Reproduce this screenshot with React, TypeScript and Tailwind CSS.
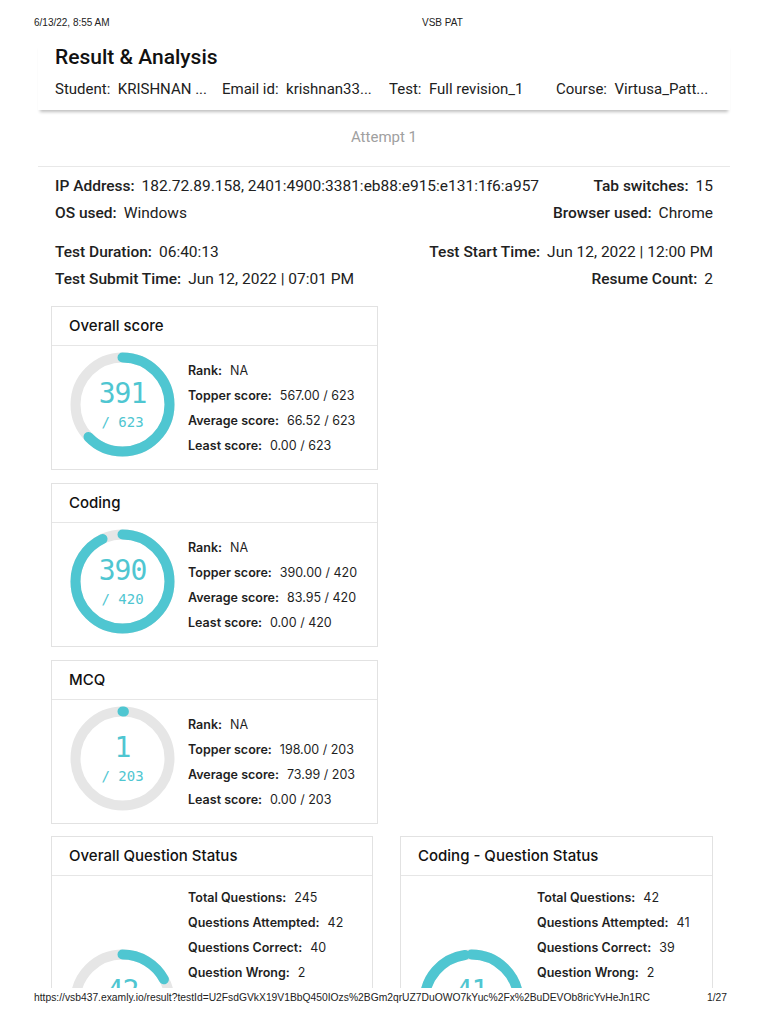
import React from "react";

const TEAL = "#4fc6d1";

function Donut({ value, total, showTotal = true }: { value: number; total: number; showTotal?: boolean }) {
  const r = 47;
  const c = 2 * Math.PI * r;
  const pct = Math.max(0, Math.min(1, value / total));
  const len = Math.max(c * pct, 0.01);
  return (
    <div className="relative h-[105px] w-[105px] shrink-0">
      <svg width="105" height="105" viewBox="0 0 105 105" className="-rotate-90">
        <circle cx="52.5" cy="52.5" r={r} fill="none" stroke="#e6e6e6" strokeWidth="10" />
        <circle
          cx="52.5"
          cy="52.5"
          r={r}
          fill="none"
          stroke={TEAL}
          strokeWidth="10"
          strokeLinecap="round"
          strokeDasharray={`${len} ${c}`}
        />
      </svg>
      <div className="absolute inset-0 flex flex-col items-center justify-center font-['DejaVu_Sans_Mono',monospace] text-[#4fc6d1]">
        <span className="text-[28px] leading-[30px] tracking-[-1px]">{value}</span>
        {showTotal ? (
          <span className="mt-[5px] text-[14px] leading-[16px]">/ {total}</span>
        ) : (
          <span className="mt-[5px] h-[16px]" />
        )}
      </div>
    </div>
  );
}

function Row({ label, value }: { label: string; value: string }) {
  return (
    <div className="flex h-[25px] items-center gap-[8px] whitespace-nowrap text-[12.5px] text-[#1f1f1f]">
      <span className="font-semibold">{label}</span>
      <span>{value}</span>
    </div>
  );
}

function ScoreCard({
  title,
  value,
  total,
  topper,
  avg,
  least,
}: {
  title: string;
  value: number;
  total: number;
  topper: string;
  avg: string;
  least: string;
}) {
  return (
    <section className="w-[327px] border border-[#e2e2e2] bg-white">
      <div className="flex h-[39px] items-center border-b border-[#e6e6e6] px-[17px] text-[15px] font-medium text-[#111]">
        {title}
      </div>
      <div className="flex h-[123px] items-start gap-[13px] pl-[18px] pt-[6px]">
        <Donut value={value} total={total} />
        <div className="pt-[7px]">
          <Row label="Rank:" value="NA" />
          <Row label="Topper score:" value={`${topper} / ${total}`} />
          <Row label="Average score:" value={`${avg} / ${total}`} />
          <Row label="Least score:" value={`${least} / ${total}`} />
        </div>
      </div>
    </section>
  );
}

function StatusCard({
  title,
  width,
  rows,
  value,
  total,
}: {
  title: string;
  width: string;
  rows: [string, string][];
  value: number;
  total: number;
}) {
  return (
    <section className={`${width} border border-[#e2e2e2] bg-white`}>
      <div className="flex h-[39px] items-center border-b border-[#e6e6e6] px-[17px] text-[15px] font-medium text-[#111]">
        {title}
      </div>
      <div className="flex h-[160px] items-start gap-[13px] pl-[18px]">
        <div className="mt-[73px]">
          <Donut value={value} total={total} showTotal={false} />
        </div>
        <div className="pt-[10px]">
          {rows.map(([l, v]) => (
            <Row key={l} label={l} value={v} />
          ))}
        </div>
      </div>
    </section>
  );
}

function Info({ label, value }: { label: string; value: string }) {
  return (
    <div className="flex items-center gap-[7px] whitespace-nowrap">
      <span className="font-medium">{label}</span>
      <span>{value}</span>
    </div>
  );
}

export default function App() {
  return (
    <div className="flex h-[1024px] w-[768px] flex-col overflow-hidden bg-white font-['Roboto',sans-serif] text-[#212121]">
      {/* print header */}
      <div className="flex h-[43px] pl-[34px] pt-[17px] font-['Liberation_Sans',Arial,sans-serif] text-[10px] leading-[12px] text-[#222]">
        <span className="w-[388px]">6/13/22, 8:55 AM</span>
        <span>VSB PAT</span>
      </div>

      <main className="h-[945px] overflow-hidden">
        <header className="mx-[38px] px-[17px] pb-[11px] shadow-[0_4px_3px_-2px_rgba(0,0,0,0.25)]">
          <h1 className="text-[21px] font-medium leading-[28px] text-[#111]">Result &amp; Analysis</h1>
          <div className="mt-[8px] grid grid-cols-[167px_167px_167px_auto] text-[15px] leading-[20px]">
            <div className="whitespace-nowrap">Student:&nbsp; KRISHNAN ...</div>
            <div className="whitespace-nowrap">Email id:&nbsp; krishnan33...</div>
            <div className="whitespace-nowrap">Test:&nbsp; Full revision_1</div>
            <div className="whitespace-nowrap">Course:&nbsp; Virtusa_Patt...</div>
          </div>
        </header>

        <div className="mx-[38px] border-b border-[#e8e8e8] pb-[19px] pt-[17px] text-center text-[15px] leading-[20px] text-[#a0a0a0]">
          Attempt 1
        </div>

        <div className="mx-[55px] mt-[9px] text-[15.5px] leading-[20px]">
          <div className="flex justify-between">
            <Info label="IP Address:" value="182.72.89.158, 2401:4900:3381:eb88:e915:e131:1f6:a957" />
            <Info label="Tab switches:" value="15" />
          </div>
          <div className="mt-[7px] flex justify-between">
            <Info label="OS used:" value="Windows" />
            <Info label="Browser used:" value="Chrome" />
          </div>
          <div className="mt-[19px] flex justify-between">
            <Info label="Test Duration:" value="06:40:13" />
            <Info label="Test Start Time:" value="Jun 12, 2022 | 12:00 PM" />
          </div>
          <div className="mt-[7px] flex justify-between">
            <Info label="Test Submit Time:" value="Jun 12, 2022 | 07:01 PM" />
            <Info label="Resume Count:" value="2" />
          </div>
        </div>

        <div className="ml-[51px] mt-[17px] flex flex-col gap-[13px] font-['Inter',sans-serif]">
          <ScoreCard title="Overall score" value={391} total={623} topper="567.00" avg="66.52" least="0.00" />
          <ScoreCard title="Coding" value={390} total={420} topper="390.00" avg="83.95" least="0.00" />
          <ScoreCard title="MCQ" value={1} total={203} topper="198.00" avg="73.99" least="0.00" />
          <div className="-mt-[1px] flex gap-[27px]">
            <StatusCard
              title="Overall Question Status"
              width="w-[322px]"
              value={42}
              total={245}
              rows={[
                ["Total Questions:", "245"],
                ["Questions Attempted:", "42"],
                ["Questions Correct:", "40"],
                ["Question Wrong:", "2"],
              ]}
            />
            <StatusCard
              title="Coding - Question Status"
              width="w-[313px]"
              value={41}
              total={42}
              rows={[
                ["Total Questions:", "42"],
                ["Questions Attempted:", "41"],
                ["Questions Correct:", "39"],
                ["Question Wrong:", "2"],
              ]}
            />
          </div>
        </div>
      </main>

      {/* print footer */}
      <div className="flex h-[36px] justify-between pl-[34px] pr-[41px] pt-[4px] font-['Liberation_Sans',Arial,sans-serif] text-[10.3px] leading-[12px] text-[#222]">
        <span>https://vsb437.examly.io/result?testId=U2FsdGVkX19V1BbQ450IOzs%2BGm2qrUZ7DuOWO7kYuc%2Fx%2BuDEVOb8ricYvHeJn1RC</span>
        <span>1/27</span>
      </div>
    </div>
  );
}
